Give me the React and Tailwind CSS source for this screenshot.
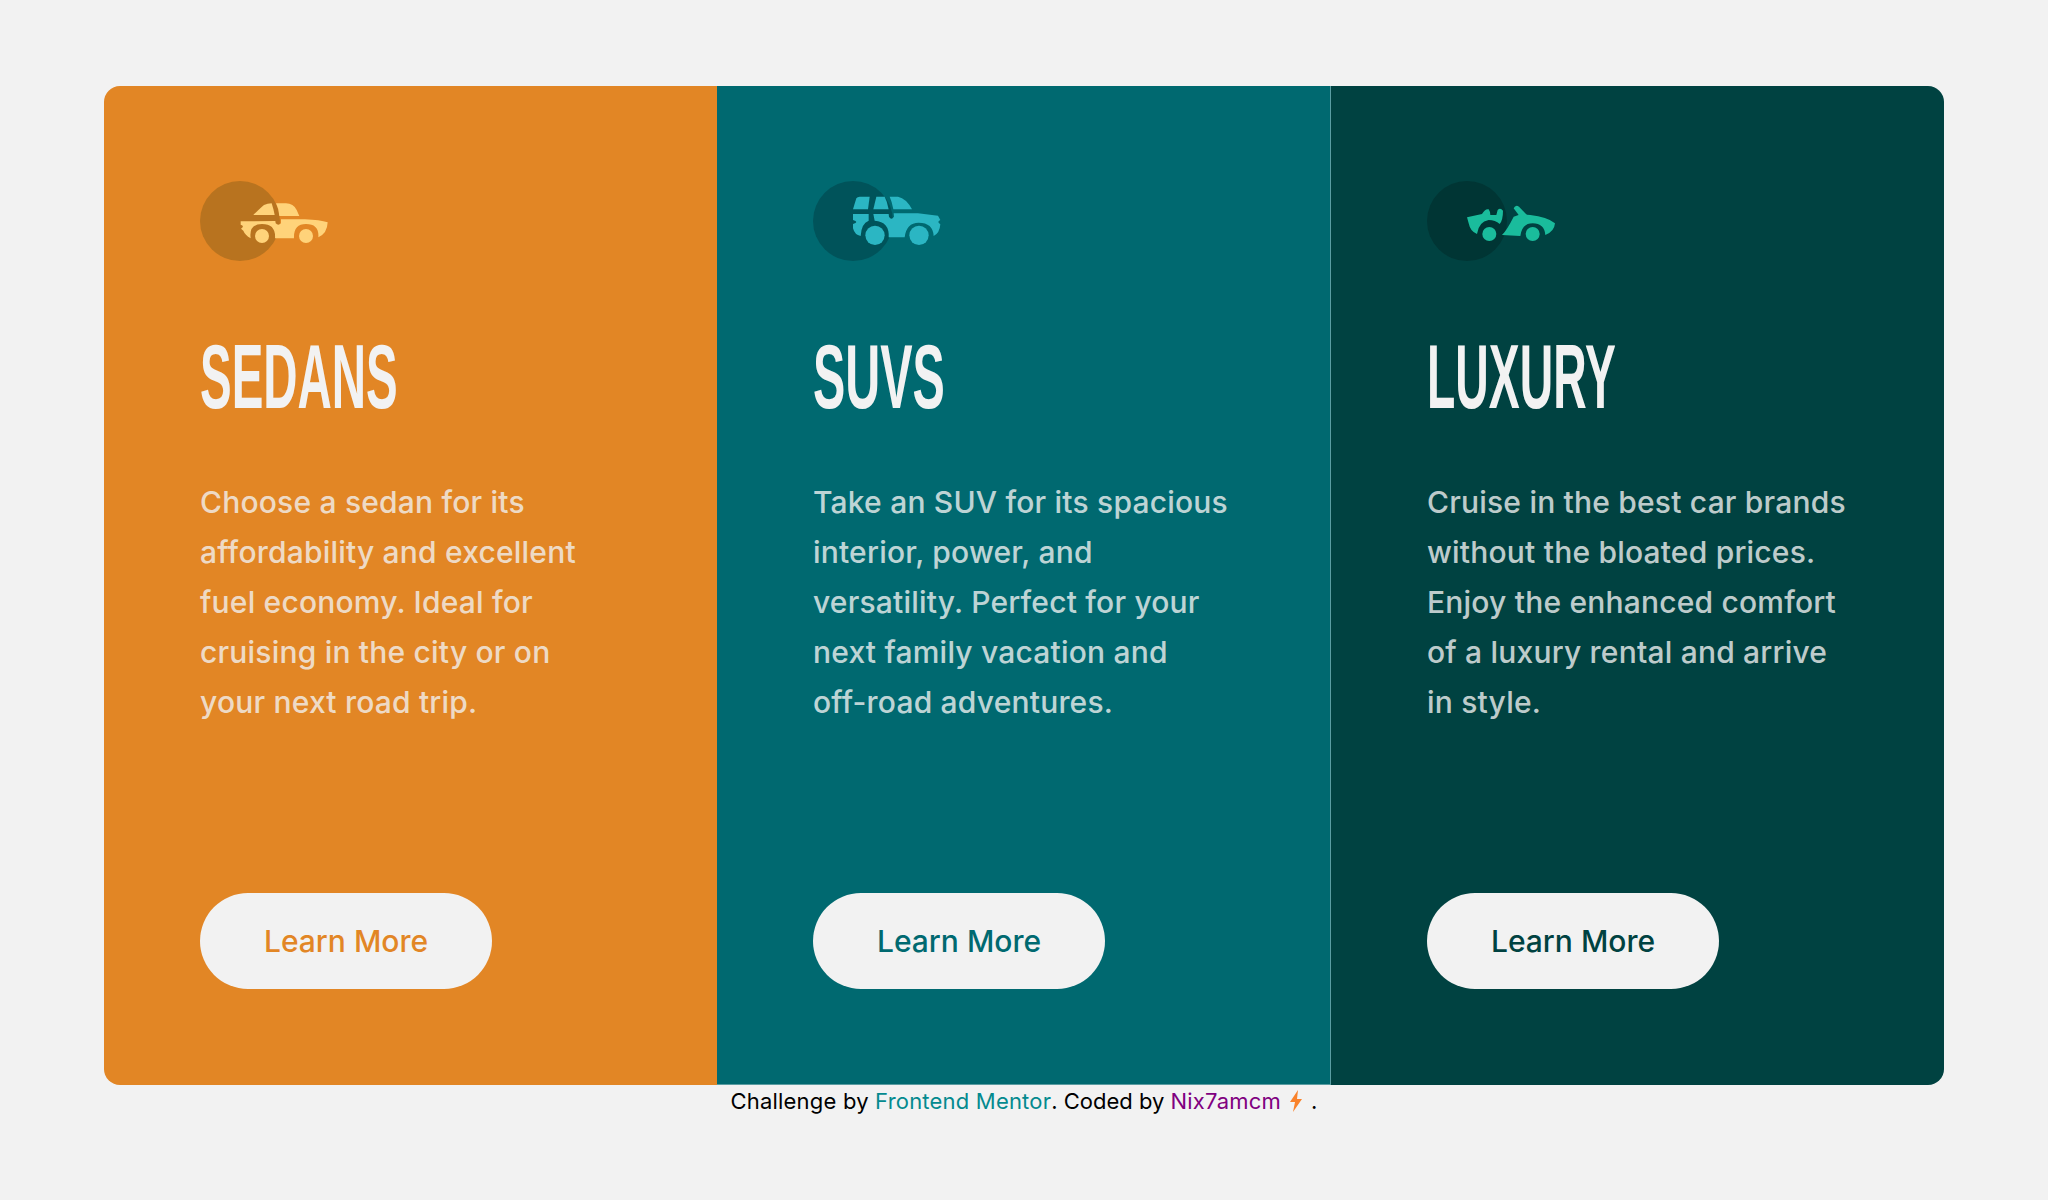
const lexend = "font-['Inter','Noto_Sans',sans-serif]";

const SedanIcon = () => (
  <svg width="128" height="80" viewBox="60 63 384 240" className="block">
    <circle cx="180" cy="183" r="120" fill="#b8731f" />
    <g fill="#ffd37a">
      <path d="M220 165Q240 145 252 135Q262 130 275 130Q280 145 284 165Z" />
      <path d="M288 130L318 130Q340 130 350 150L358 168L298 168Q296 145 288 130Z" />
      <path d="M182 184L286 183L287 190Q295 198 303 190L303 178L375 178Q420 180 443 187Q442 220 415 232Q418 192 378 192Q340 192 342 235L285 235Q288 192 246 192Q206 192 212 235Q195 225 190 212L183 206Q195 198 182 194Z" />
      <circle cx="246" cy="228" r="21" />
      <circle cx="378" cy="228" r="21" />
    </g>
  </svg>
);

const SuvIcon = () => (
  <svg width="128" height="80" viewBox="55 63 384 240" className="block">
    <circle cx="175" cy="183" r="120" fill="#00535a" />
    <g fill="#2bb6c3">
      <path d="M185 115Q188 110 195 110L225 110L220 148L175 148Z" />
      <path d="M245 110L270 110Q278 125 282 148L236 148Z" />
      <path d="M285 110L310 110Q335 115 352 148L296 148Q292 125 285 110Z" />
      <path d="M175 162L222 162L222 182Q200 190 198 228Q180 225 175 205L175 192Q195 186 175 180Z" />
      <path d="M236 162L282 162L283 170Q290 182 298 170L297 160L370 160L430 167L437 180Q425 185 437 193Q435 220 417 228Q415 188 372 188Q335 188 330 232L282 232Q285 185 240 182Z" />
      <circle cx="241" cy="226" r="29" />
      <circle cx="373" cy="226" r="29" />
    </g>
  </svg>
);

const LuxuryIcon = () => (
  <svg width="128" height="80" viewBox="50 63 384 240" className="block">
    <circle cx="170" cy="183" r="120" fill="#003534" />
    <g fill="#1abc9c">
      <path d="M170 172L215 162Q225 145 235 148Q240 155 240 165L258 165L262 150Q270 142 278 152Q278 180 268 192Q255 180 235 180Q205 185 200 222Q180 215 175 190Z" />
      <path d="M275 225Q290 210 310 170Q330 160 360 165Q410 170 434 190Q432 215 405 225Q402 190 367 190Q335 190 330 228Z" />
      <path d="M310 145Q316 132 326 140L350 165L330 172Z" />
      <circle cx="237" cy="222" r="21" />
      <circle cx="367" cy="222" r="21" />
    </g>
  </svg>
);

const Card = ({ bg, textColor, Icon, title, lines, extra, squeeze }) => (
  <div className={`flex-1 min-w-0 flex flex-col pt-[95px] pb-[96px] px-[96px] ${bg} ${extra}`}>
    <Icon />
    <h2 className={`mt-[73px] h-[86px] flex items-center origin-left font-['Liberation_Sans',sans-serif] font-bold text-[90px] leading-[86px] text-[#f2f2f2] uppercase ${squeeze}`}>
      {title}
    </h2>
    <p className={`mt-[57px] h-[250px] font-medium text-[30px] tracking-[0.2px] leading-[50px] text-[#f2f2f2]/80 whitespace-nowrap ${lexend}`}>
      {lines.map((l) => (
        <span key={l} className="block">{l}</span>
      ))}
    </p>
    <a className={`mt-[166px] w-[292px] h-[96px] rounded-full bg-[#f2f2f2] flex items-center justify-center font-medium text-[30px] ${textColor} ${lexend}`}>
      Learn More
    </a>
  </div>
);

export default function App() {
  return (
    <div className="min-h-[1200px] bg-[#f2f2f2] pt-[86px] flex flex-col items-center">
      <main className="w-[1840px] flex rounded-[16px] overflow-hidden">
        <Card bg="bg-[#e28625]" textColor="text-[#e28625]" Icon={SedanIcon} title="Sedans" squeeze="scale-x-[0.527]"
          lines={["Choose a sedan for its", "affordability and excellent", "fuel economy. Ideal for", "cruising in the city or on", "your next road trip."]} />
        <Card bg="bg-[#006970]" textColor="text-[#006970]" Icon={SuvIcon} title="SUVs" squeeze="scale-x-[0.538]" extra="border-r border-[#5a9da2] shadow-[inset_0_-1px_0_#5a9da2]"
          lines={["Take an SUV for its spacious", "interior, power, and", "versatility. Perfect for your", "next family vacation and", "off-road adventures."]} />
        <Card bg="bg-[#004241]" textColor="text-[#004241]" Icon={LuxuryIcon} title="Luxury" squeeze="scale-x-[0.515]"
          lines={["Cruise in the best car brands", "without the bloated prices.", "Enjoy the enhanced comfort", "of a luxury rental and arrive", "in style."]} />
      </main>
      <footer className={`h-[32px] flex items-center text-[22px] tracking-[0.2px] text-black whitespace-pre ${lexend}`}>
        <span>Challenge by </span>
        <a className="text-[#048a8f]">Frontend Mentor</a>
        <span className="tracking-normal">. Coded by </span>
        <a className="text-[#800080]">Nix7amcm</a>
        <svg width="16" height="22" viewBox="0 0 16 22" className="mx-[7px]">
          <path d="M10 0L2 12L7 12L5 22L14 9L9 9Z" fill="#f9822b" />
        </svg>
        <span>.</span>
      </footer>
    </div>
  );
}
